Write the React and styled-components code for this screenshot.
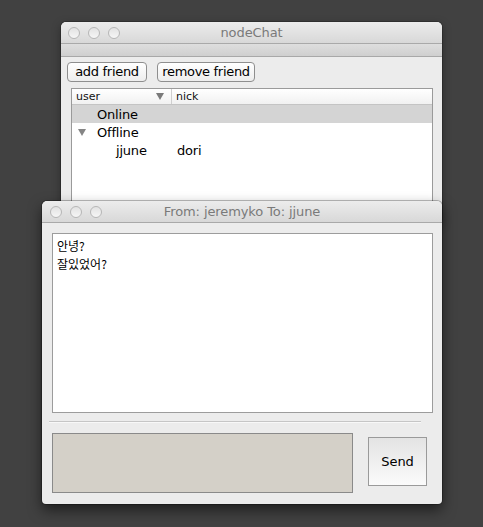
import React from 'react';
import styled, { createGlobalStyle } from 'styled-components';

const GlobalStyle = createGlobalStyle`
  html, body {
    margin: 0;
    padding: 0;
    background: #414141;
  }
  body {
    width: 483px;
    height: 527px;
    overflow: hidden;
    font-family: "DejaVu Sans", "Noto Sans CJK KR", sans-serif;
  }
`;

const Desktop = styled.div`
  position: relative;
  width: 483px;
  height: 527px;
  background: #414141;
`;

const Window = styled.div`
  position: absolute;
  left: ${(p) => p.left}px;
  top: ${(p) => p.top}px;
  width: ${(p) => p.width}px;
  height: ${(p) => p.height}px;
  background: #ececec;
  border-radius: 5px 5px 4px 4px;
  box-shadow: ${(p) => (p.front ? '0 6px 14px rgba(0,0,0,0.55), 0 0 0 1px rgba(0,0,0,0.25)' : '0 3px 10px rgba(0,0,0,0.35), 0 0 0 1px rgba(0,0,0,0.2)')};
  overflow: hidden;
  display: flex;
  flex-direction: column;
`;

const TitleBar = styled.div`
  position: relative;
  height: 21px;
  flex: none;
  display: flex;
  align-items: center;
  justify-content: center;
  background: linear-gradient(#ececec, #d8d8d8);
  border-bottom: 1px solid #a9a9a9;
  border-radius: 5px 5px 0 0;
`;

const Lights = styled.div`
  position: absolute;
  left: ${(p) => p.inset}px;
  top: 5px;
  display: flex;
  gap: 8px;
`;

const Light = styled.span`
  width: 10px;
  height: 10px;
  border-radius: 50%;
  border: 1px solid #b6b6b6;
  background: linear-gradient(#e2e2e2, #f6f6f6);
`;

const Title = styled.div`
  font-size: 13px;
  color: #7a7a7a;
  letter-spacing: -0.1px;
`;

const Strip = styled.div`
  height: 12px;
  flex: none;
  background: linear-gradient(#dedede, #cfcfcf);
  border-bottom: 1px solid #a8a8a8;
`;

const Body = styled.div`
  flex: 1;
  display: flex;
  flex-direction: column;
  padding: ${(p) => p.pad};
`;

const Toolbar = styled.div`
  display: flex;
  gap: 10px;
`;

const PushButton = styled.button`
  width: ${(p) => p.width}px;
  height: 20px;
  padding: 0;
  font-family: "DejaVu Sans", sans-serif;
  font-size: 13px;
  letter-spacing: -0.3px;
  color: #000;
  background: linear-gradient(#ffffff, #ededed);
  border: 1px solid #8e8e8e;
  border-radius: 4px;
  line-height: 18px;
`;

const Table = styled.div`
  margin: 6px 0 0 4px;
  width: 362px;
  box-sizing: border-box;
  flex: 1;
  background: #fff;
  border: 1px solid #9a9a9a;
  border-bottom: none;
`;

const Header = styled.div`
  height: 15px;
  display: flex;
  align-items: center;
  border-bottom: 1px solid #c4c4c4;
  background: linear-gradient(#ffffff, #f1f1f1);
  font-size: 11px;
  color: #111;
`;

const HeadCell = styled.div`
  position: relative;
  width: ${(p) => p.width}px;
  padding-left: 4px;
  height: 100%;
  display: flex;
  align-items: center;
  border-right: ${(p) => (p.divider ? '1px solid #cfcfcf' : 'none')};
  box-sizing: border-box;
`;

const SortArrow = styled.span`
  position: absolute;
  right: 7px;
  top: 4px;
  width: 0;
  height: 0;
  border-left: 4px solid transparent;
  border-right: 4px solid transparent;
  border-top: 7px solid #7a7a7a;
`;

const Row = styled.div`
  height: 18px;
  display: flex;
  align-items: center;
  background: ${(p) => (p.selected ? '#d4d4d4' : 'transparent')};
  font-size: 13px;
  color: #000;
  letter-spacing: -0.2px;
`;

const Disclosure = styled.span`
  width: 0;
  height: 0;
  margin-left: 6px;
  margin-right: 11px;
  border-left: 4px solid transparent;
  border-right: 4px solid transparent;
  border-top: 7px solid #858585;
`;

const Cell = styled.span`
  width: ${(p) => p.width}px;
  padding-left: ${(p) => p.indent}px;
`;

const MessageLog = styled.div`
  flex: none;
  width: 381px;
  height: 180px;
  box-sizing: border-box;
  background: #fff;
  border: 1px solid #9c9c9c;
  padding: 3px 4px;
  font-family: "Noto Sans CJK KR", sans-serif;
  font-size: 12px;
  font-weight: 400;
  line-height: 18px;
  color: #000;
`;

const Divider = styled.div`
  margin: 8px 12px 0 -3px;
  height: 1px;
  background: #c6c6c6;
  border-bottom: 1px solid #f8f8f8;
`;

const Composer = styled.div`
  display: flex;
  align-items: flex-start;
  margin-top: 10px;
  gap: 15px;
`;

const Input = styled.div`
  width: 301px;
  height: 60px;
  box-sizing: border-box;
  background: #d4d0c8;
  border: 1px solid #8a8a8a;
`;

const SendButton = styled.button`
  margin-top: 4px;
  width: 59px;
  height: 49px;
  font-family: "DejaVu Sans", sans-serif;
  font-size: 13px;
  color: #000;
  background: linear-gradient(#e3e3e3, #fbfbfb);
  border: 1px solid #9a9a9a;
  border-radius: 0;
`;

const Traffic = ({ inset }) => (
  <Lights inset={inset}>
    <Light />
    <Light />
    <Light />
  </Lights>
);

export default function App() {
  return (
    <Desktop>
      <GlobalStyle />
      <Window left={61} top={22} width={381} height={200}>
        <TitleBar>
          <Traffic inset={7} />
          <Title>nodeChat</Title>
        </TitleBar>
        <Strip />
        <Body pad="5px 6px 0">
          <Toolbar>
            <PushButton width={80}>add friend</PushButton>
            <PushButton width={98}>remove friend</PushButton>
          </Toolbar>
          <Table>
            <Header>
              <HeadCell width={100} divider>
                user
                <SortArrow />
              </HeadCell>
              <HeadCell width={120}>nick</HeadCell>
            </Header>
            <Row selected>
              <Cell width={100} indent={25}>Online</Cell>
            </Row>
            <Row>
              <Disclosure />
              Offline
            </Row>
            <Row>
              <Cell width={61} indent={44}>jjune</Cell>
              <Cell width={80} indent={0}>dori</Cell>
            </Row>
          </Table>
        </Body>
      </Window>
      <Window front left={42} top={201} width={400} height={303}>
        <TitleBar>
          <Traffic inset={8} />
          <Title>From: jeremyko To: jjune</Title>
        </TitleBar>
        <Body pad="10px 9px 0 10px">
          <MessageLog>
            안녕?
            <br />
            잘있었어?
          </MessageLog>
          <Divider />
          <Composer>
            <Input />
            <SendButton>Send</SendButton>
          </Composer>
        </Body>
      </Window>
    </Desktop>
  );
}
